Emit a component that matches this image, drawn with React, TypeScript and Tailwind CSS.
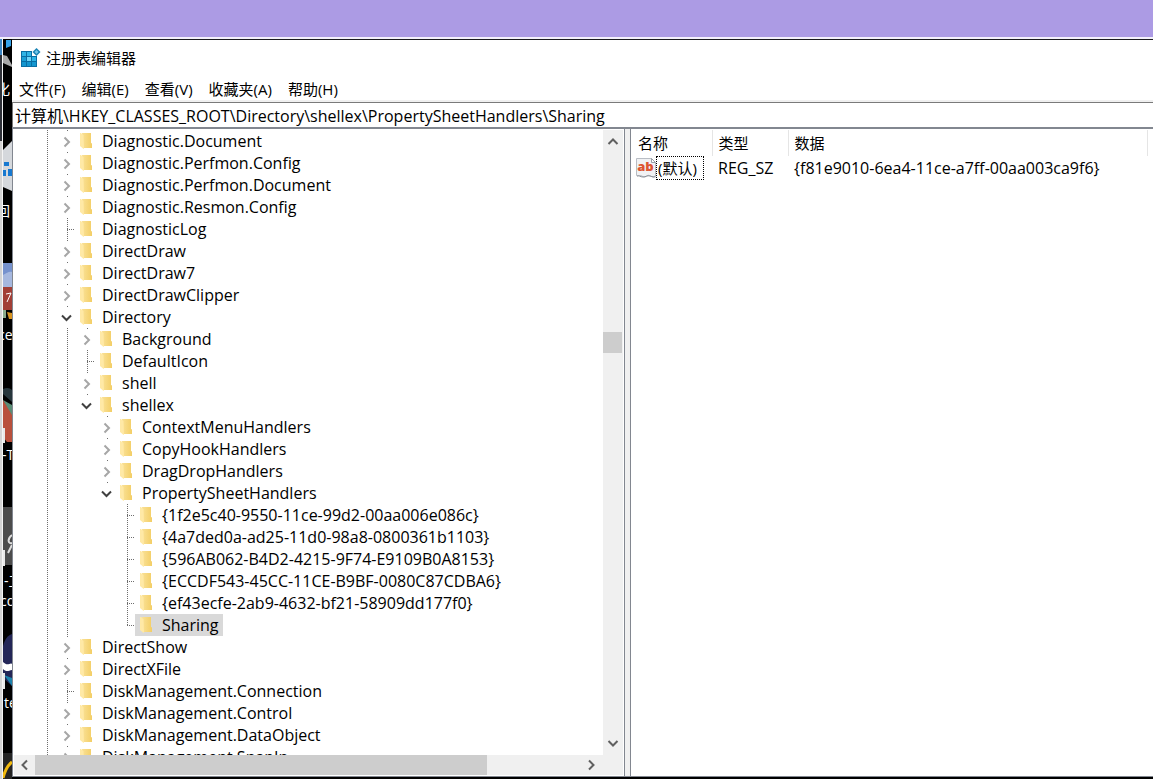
import { ReactElement } from 'react';
import clsx from 'clsx';

type Node = {
  label: string;
  depth: number;
  state: 'open' | 'closed' | 'leaf' | 'last';
  selected?: boolean;
};

const NODES: Node[] = [
  { label: 'Diagnostic.Document', depth: 0, state: 'closed' },
  { label: 'Diagnostic.Perfmon.Config', depth: 0, state: 'closed' },
  { label: 'Diagnostic.Perfmon.Document', depth: 0, state: 'closed' },
  { label: 'Diagnostic.Resmon.Config', depth: 0, state: 'closed' },
  { label: 'DiagnosticLog', depth: 0, state: 'leaf' },
  { label: 'DirectDraw', depth: 0, state: 'closed' },
  { label: 'DirectDraw7', depth: 0, state: 'closed' },
  { label: 'DirectDrawClipper', depth: 0, state: 'closed' },
  { label: 'Directory', depth: 0, state: 'open' },
  { label: 'Background', depth: 1, state: 'closed' },
  { label: 'DefaultIcon', depth: 1, state: 'leaf' },
  { label: 'shell', depth: 1, state: 'closed' },
  { label: 'shellex', depth: 1, state: 'open' },
  { label: 'ContextMenuHandlers', depth: 2, state: 'closed' },
  { label: 'CopyHookHandlers', depth: 2, state: 'closed' },
  { label: 'DragDropHandlers', depth: 2, state: 'closed' },
  { label: 'PropertySheetHandlers', depth: 2, state: 'open' },
  { label: '{1f2e5c40-9550-11ce-99d2-00aa006e086c}', depth: 3, state: 'leaf' },
  { label: '{4a7ded0a-ad25-11d0-98a8-0800361b1103}', depth: 3, state: 'leaf' },
  { label: '{596AB062-B4D2-4215-9F74-E9109B0A8153}', depth: 3, state: 'leaf' },
  { label: '{ECCDF543-45CC-11CE-B9BF-0080C87CDBA6}', depth: 3, state: 'leaf' },
  { label: '{ef43ecfe-2ab9-4632-bf21-58909dd177f0}', depth: 3, state: 'leaf' },
  { label: 'Sharing', depth: 3, state: 'last', selected: true },
  { label: 'DirectShow', depth: 0, state: 'closed' },
  { label: 'DirectXFile', depth: 0, state: 'closed' },
  { label: 'DiskManagement.Connection', depth: 0, state: 'leaf' },
  { label: 'DiskManagement.Control', depth: 0, state: 'closed' },
  { label: 'DiskManagement.DataObject', depth: 0, state: 'closed' },
  { label: 'DiskManagement.SnapIn', depth: 0, state: 'closed' },
];

const MENUS = ['文件(F)', '编辑(E)', '查看(V)', '收藏夹(A)', '帮助(H)'];

function RegistryIcon(): ReactElement {
  return (
    <svg className="h-5 w-5" viewBox="0 0 20 20">
      <path d="M0 3h11v5h5v11H0z" fill="#0a6ea3" />
      <path d="M1 4h4v4H1zM6 4h4v4H6z" fill="#2fb4e6" />
      <path d="M1 9h4v4H1z" fill="#1a9fd6" />
      <path d="M6 9h4v4H6z" fill="#6fd3f7" />
      <path d="M11 9h4v4h-4z" fill="#2fb4e6" />
      <path d="M1 14h4v4H1zM6 14h4v4H6zM11 14h4v4h-4z" fill="#1496cf" />
      <path d="M15.500 0 19.500 4 15.500 8 11.500 4z" fill="#1a83b4" />
      <path d="M15.500 2 17.500 4 15.500 6 13.500 4z" fill="#74c6e8" />
    </svg>
  );
}

function FolderIcon(): ReactElement {
  return (
    <svg className="h-4 w-4 shrink-0" viewBox="0 0 16 16">
      <linearGradient id="folder">
        <stop offset="0" stopColor="#fae196" />
        <stop offset="1" stopColor="#f3ce66" />
      </linearGradient>
      <path d="M2 0h9v10l1 .5V15H3z" fill="url(#folder)" />
      <path d="M0 0h1l2.500 2.500L4 16l-1-.5-3-2.500z" fill="#ffe9a6" />
    </svg>
  );
}

function StringValueIcon(): ReactElement {
  return (
    <svg className="h-5 w-5 shrink-0" viewBox="0 0 20 20">
      <path
        d="M.5 .5h15l4 4v14.500c-2 1-4-.5-6-1.500s-3 1.500-5 1.500-3-2-5-1.500-2 .5-3 0z"
        fill="#f1f2f4"
        stroke="#b9bdc4"
      />
      <path d="M15.500 .5v4h4z" fill="#fff" stroke="#9aa0a8" />
      <path d="M1 18c2-1 3 1 6 1s4-2 7-1 4 1 5 0" fill="none" stroke="#8b9097" />
      <text
        x="9.500"
        y="13"
        textAnchor="middle"
        fontFamily="Open Sans, sans-serif"
        fontSize="13"
        fontWeight="800"
        fill="#dd5531"
      >
        ab
      </text>
    </svg>
  );
}

function Arrow({ className, d }: { className?: string; d: string }) {
  return (
    <svg
      className={clsx('h-3 w-3', className)}
      viewBox="0 0 12 12"
      fill="none"
      stroke="currentColor"
      strokeWidth="2"
    >
      <path d={d} />
    </svg>
  );
}

// One 20px column of the tree: a dotted guide that passes straight through
function Guide({ hidden }: { hidden?: boolean }) {
  return (
    <svg className="h-full w-5 shrink-0" viewBox="0 0 20 22">
      {!hidden && (
        <path d="M12.500 0v22" stroke="#6e6e6e" strokeDasharray="1 1" />
      )}
    </svg>
  );
}

function Expander({ state }: { state: Node['state'] }) {
  return (
    <svg className="h-full w-5 shrink-0" viewBox="0 0 20 22" fill="none">
      {state === 'closed' && (
        <>
          <path d="M12.500 0v1" stroke="#6e6e6e" />
          <path d="M9.500 7.500 14 12l-4.500 4.500" stroke="#a6a6a6" strokeWidth="2" />
        </>
      )}
      {state === 'open' && (
        <>
          <path d="M12.500 0v1" stroke="#6e6e6e" />
          <path d="M7 9.500l4.500 4.500L16 9.500" stroke="#404040" strokeWidth="2" />
        </>
      )}
      {state === 'leaf' && (
        <path d="M12.500 0v22M12 11.500h8" stroke="#6e6e6e" strokeDasharray="1 1" />
      )}
      {state === 'last' && (
        <path d="M12.500 0v12M12 11.500h8" stroke="#6e6e6e" strokeDasharray="1 1" />
      )}
    </svg>
  );
}

function TreeRow({ node }: { node: Node }) {
  return (
    <li role="treeitem" aria-selected={!!node.selected} className="flex h-[22px] pl-[21px]">
      <Guide />
      {Array.from({ length: node.depth }, (_, i) => (
        <Guide key={i} hidden={i > 0} />
      ))}
      <Expander state={node.state} />
      <button
        className={clsx(
          'flex items-center gap-1.5 pr-1 pl-[5px] whitespace-nowrap',
          node.selected && 'bg-[#d9d9d9]',
        )}
      >
        <FolderIcon />
        {node.label}
      </button>
    </li>
  );
}

// Sliver of the desktop that shows to the left of the window
function Desktop() {
  return (
    <div className="relative w-3 shrink-0 overflow-hidden bg-black text-sm leading-4 whitespace-nowrap text-white">
      <svg className="absolute top-0 left-0" width="12" height="741" viewBox="0 38 12 741">
        <path d="M6 39h5v6l-5 2z" fill="#35a3ea" />
        <path d="M3 54l4 1 5 9v2L3 62z" fill="#a8a8a8" />
        <path d="M12 140 3 149v37l9 4z" fill="#d5d8dc" />
        <path d="M4 161h5v4H4zM3 169h3v6H3zM8 168h4v7H8z" fill="#1779d0" />
        <path d="M3 262h9v24H3z" fill="#7692ce" />
        <path d="M3 274c4-2 6-4 9-3v16H3z" fill="#a6b8df" />
        <path d="M3 286h9v23H3z" fill="#a23f36" />
        <path d="M6 293l5-1-4 9" stroke="#fff" fill="none" />
        <path d="M3 309h3v8H3z" fill="#8bab8b" />
        <path d="M7 311l5 1v6H9z" fill="#d89320" />
        <path d="M3 388c4-2 7-1 9 1v12l-9-8z" fill="#27363c" />
        <path d="M3 399l9 12v30H7l-4-5z" fill="#b9503c" />
        <path d="M3 399l9 5v10z" fill="#5b8d76" />
        <path d="M3 427h2v15H3z" fill="#e9e9e9" />
        <path d="M3 506h9v58H3z" fill="#4c4c4c" />
        <path d="M12 534c-5 4-4 9 0 8M8 552l4-8" stroke="#ddd" strokeWidth="2" fill="none" />
        <path d="M3 549h2v16H3z" fill="#e9e9e9" />
        <path d="M12 633c-5 2-7 5-9 12v32l9 8z" fill="#232657" />
        <path d="M3 661c5 5 7 0 9 2v6c-4 1-6 2-9-1z" fill="#fff" />
        <path d="M4 674l8 3v8z" fill="#1b83ad" />
        <path d="M3 672h2v16H3z" fill="#e9e9e9" />
        <path d="M3 752h9v27H3z" fill="#242424" />
        <path d="M3 777c2-8 5-13 9-16" stroke="#f2b90d" strokeWidth="3" fill="none" />
      </svg>
      <span className="absolute top-[42px] -left-1">化</span>
      <span className="absolute top-[164px] -left-1">回</span>
      <span className="absolute top-[288px] -left-0.5">ce</span>
      <span className="absolute top-[408px] left-0.5">-T</span>
      <span className="absolute top-[534px] left-1">-工</span>
      <span className="absolute top-[554px] left-0">cd</span>
      <span className="absolute top-[656px] left-1">te</span>
      <div className="absolute inset-y-0 left-0 flex w-[3px]">
        <div className="flex w-0.5 flex-col">
          <div className="h-4 bg-[#3c86c4]" />
          <div className="h-[86px] bg-[#2f3138]" />
          <div className="flex-1 bg-[#d4d4d4]" />
        </div>
        <div className="w-px bg-[#f4f4f4]" />
      </div>
    </div>
  );
}

function TreePane() {
  return (
    <section className="flex w-[613px] shrink-0 flex-col border-x border-[#828790] pr-px pl-px">
      <div className="flex min-h-0 flex-1">
        <ul role="tree" className="h-full min-w-0 flex-1 overflow-hidden pt-px text-base leading-[22px]">
          {NODES.map((node) => (
            <TreeRow key={node.label} node={node} />
          ))}
        </ul>
        <div className="mt-px flex w-5 flex-col bg-[#f0f0f0] pr-px text-[#606060]">
          <button aria-label="向上滚动" className="flex h-6 items-center justify-center">
            <Arrow d="M1.500 8 6 3.500 10.500 8" />
          </button>
          <div className="flex-1 pt-[178px]">
            <div className="h-[21px] bg-[#cdcdcd]" />
          </div>
          <button aria-label="向下滚动" className="flex h-6 items-center justify-center">
            <Arrow d="M1.500 4 6 8.500 10.500 4" />
          </button>
        </div>
      </div>
      <div className="flex h-5 bg-[#f0f0f0] text-[#606060]">
        <button aria-label="向左滚动" className="flex w-[21px] items-center justify-center">
          <Arrow d="M8 1.500 3.500 6 8 10.500" />
        </button>
        <div className="flex-1">
          <div className="h-full w-[83%] bg-[#cdcdcd]" />
        </div>
        <button aria-label="向右滚动" className="mr-5 flex w-6 items-center justify-center">
          <Arrow d="M4 1.500 8.500 6 4 10.500" />
        </button>
      </div>
      <div className="h-px" />
    </section>
  );
}

function ValuePane() {
  return (
    <section className="min-w-0 flex-1 border-l border-[#828790] pt-px">
      <table className="w-full table-fixed border-collapse text-left">
        <colgroup>
          <col className="w-[81px]" />
          <col className="w-[76px]" />
          <col />
          <col className="w-1.5" />
        </colgroup>
        <thead>
          <tr className="h-[26px]">
            <th className="border-r border-[#e5e5e5] p-0 pl-[7px] font-normal">名称</th>
            <th className="border-r border-[#e5e5e5] p-0 pl-1.5 font-normal">类型</th>
            <th className="border-r border-[#e5e5e5] p-0 pl-1.5 font-normal">数据</th>
            <th className="p-0" />
          </tr>
        </thead>
        <tbody>
          <tr className="h-6 align-top">
            <td className="p-0">
              <span className="flex items-center pl-[5px]">
                <StringValueIcon />
                <span className="h-6 w-12 border border-dotted border-black pl-px leading-[22px] whitespace-nowrap">
                  (默认)
                </span>
              </span>
            </td>
            <td className="p-0 pl-1.5 text-base leading-6">REG_SZ</td>
            <td className="p-0 pl-1.5 text-base leading-6">
              {'{f81e9010-6ea4-11ce-a7ff-00aa003ca9f6}'}
            </td>
            <td className="p-0" />
          </tr>
        </tbody>
      </table>
    </section>
  );
}

export default function App() {
  return (
    <div className="flex h-screen flex-col overflow-hidden bg-[#ac9be4] font-['Open_Sans','Noto_Sans_CJK_SC',sans-serif] text-[15px] leading-[22px] text-black">
      <div className="h-[37px] shrink-0" />
      <div className="h-0.5 shrink-0 bg-[#f3f0fb]" />
      <div className="flex min-h-0 flex-1">
        <Desktop />
        <main className="flex min-w-0 flex-1 flex-col border-t border-[#1a1a1e] bg-white">
          <header className="flex h-9 shrink-0 items-center gap-[5px] pl-[9px]">
            <RegistryIcon />
            <h1>注册表编辑器</h1>
          </header>
          <nav className="flex h-6 shrink-0 gap-4 pt-0.5 pl-[7px]">
            {MENUS.map((menu) => (
              <button key={menu}>{menu}</button>
            ))}
          </nav>
          <div className="h-0.5 shrink-0 bg-[#f0f0f0]" />
          <input
            aria-label="地址"
            className="h-[25px] w-full shrink-0 border-t border-l border-[#7a7a7a] pl-0.5 text-base outline-none"
            defaultValue="计算机\HKEY_CLASSES_ROOT\Directory\shellex\PropertySheetHandlers\Sharing"
          />
          <div className="flex min-h-0 flex-1 border-t-2 border-b border-[#828790]">
            <TreePane />
            <div className="w-[5px] shrink-0 bg-[#f0f0f0]" />
            <ValuePane />
          </div>
          <div className="h-0.5 shrink-0 bg-black" />
        </main>
      </div>
    </div>
  );
}
